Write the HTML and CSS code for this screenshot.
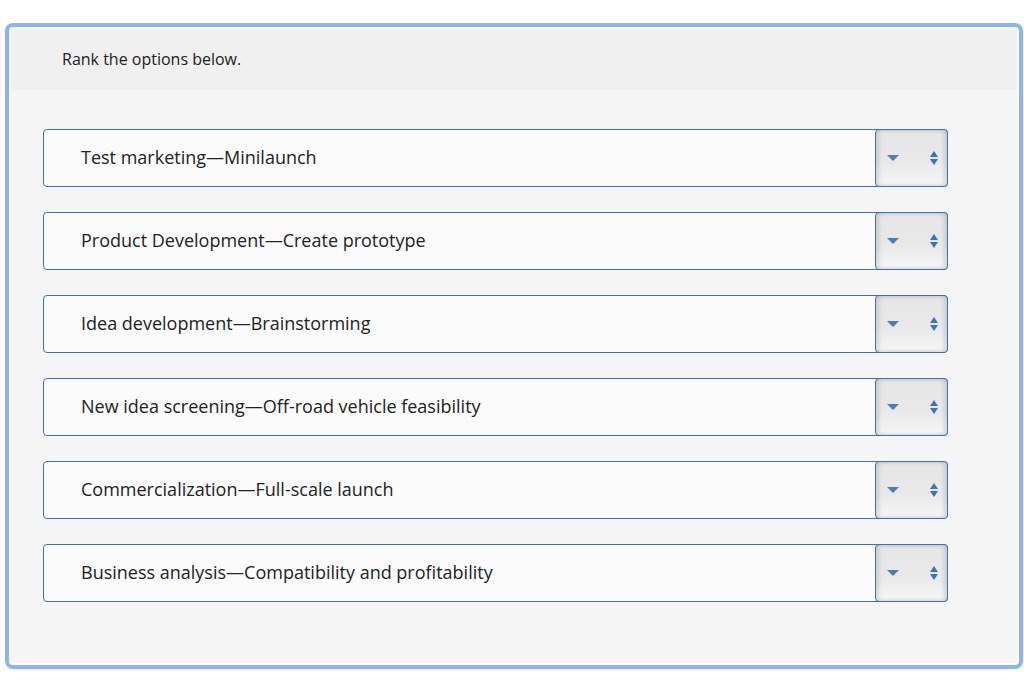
FILE: index.html
```html
<!DOCTYPE html>
<html lang="en">
<head>
    <meta charset="UTF-8">
    <title>Rank the options</title>
    <link rel="stylesheet" href="styles.css">
</head>
<body>
    <div class="question">
        <div class="prompt">Rank the options below.</div>
        <div class="rank-list">
            <div class="rank-item">
                <div class="rank-label">Test marketing—Minilaunch</div>
                <div class="rank-select"><span class="caret"></span><span class="spinner"></span></div>
            </div>
            <div class="rank-item">
                <div class="rank-label">Product Development—Create prototype</div>
                <div class="rank-select"><span class="caret"></span><span class="spinner"></span></div>
            </div>
            <div class="rank-item">
                <div class="rank-label">Idea development—Brainstorming</div>
                <div class="rank-select"><span class="caret"></span><span class="spinner"></span></div>
            </div>
            <div class="rank-item">
                <div class="rank-label">New idea screening—Off-road vehicle feasibility</div>
                <div class="rank-select"><span class="caret"></span><span class="spinner"></span></div>
            </div>
            <div class="rank-item">
                <div class="rank-label">Commercialization—Full-scale launch</div>
                <div class="rank-select"><span class="caret"></span><span class="spinner"></span></div>
            </div>
            <div class="rank-item">
                <div class="rank-label">Business analysis—Compatibility and profitability</div>
                <div class="rank-select"><span class="caret"></span><span class="spinner"></span></div>
            </div>
        </div>
    </div>
</body>
</html>
```

FILE: styles.css
```css
body {
    font-family: "Open Sans", "Liberation Sans", sans-serif;
    background-color: #ffffff;
    margin: 0;
    padding: 23px 2px 0 5px;
    color: #222;
}
.question {
    width: 1006px;
    height: 634px;
    border: 4px solid #8ab4f8;
    border-radius: 8px;
    padding: 2px;
    background-color: #ffffff;
}
.prompt {
    background-color: #f0f0f0;
    height: 61px;
    line-height: 61px;
    padding-left: 51px;
    font-size: 16px;
    border-radius: 4px 4px 0 0;
}
.rank-list {
    background-color: #f5f5f5;
    height: 573px;
    padding: 39px 0 0 32px;
    box-sizing: border-box;
    display: flex;
    flex-direction: column;
    gap: 25px;
}
.rank-item {
    width: 905px;
    height: 58px;
    box-sizing: border-box;
    display: flex;
    border: 1px solid #3d72b8;
    border-radius: 4px;
    background-color: #fbfbfb;
}
.rank-label {
    flex: 1;
    padding-left: 37px;
    line-height: 54px;
    font-size: 18px;
}
.rank-select {
    width: 73px;
    box-sizing: border-box;
    margin: -1px -1px -1px 0;
    border: 1px solid #3d72b8;
    border-radius: 4px;
    background: linear-gradient(#e6e6e6, #e8e8e8 55%, #f6f6f6);
    box-shadow: inset 3px 0 4px rgba(0, 0, 0, 0.12), inset -3px 0 4px rgba(0, 0, 0, 0.12);
    display: flex;
    align-items: center;
    justify-content: space-between;
    padding: 0 8px 0 11px;
}
.caret {
    width: 0;
    height: 0;
    border-left: 6px solid transparent;
    border-right: 6px solid transparent;
    border-top: 6px solid #4a7cc0;
}
.spinner {
    position: relative;
    width: 9px;
    height: 14px;
}
.spinner::before,
.spinner::after {
    content: "";
    position: absolute;
    left: 0;
    border-left: 4.5px solid transparent;
    border-right: 4.5px solid transparent;
}
.spinner::before {
    top: 0;
    border-bottom: 6px solid #3d72b8;
}
.spinner::after {
    bottom: 0;
    border-top: 6px solid #3d72b8;
}
```
